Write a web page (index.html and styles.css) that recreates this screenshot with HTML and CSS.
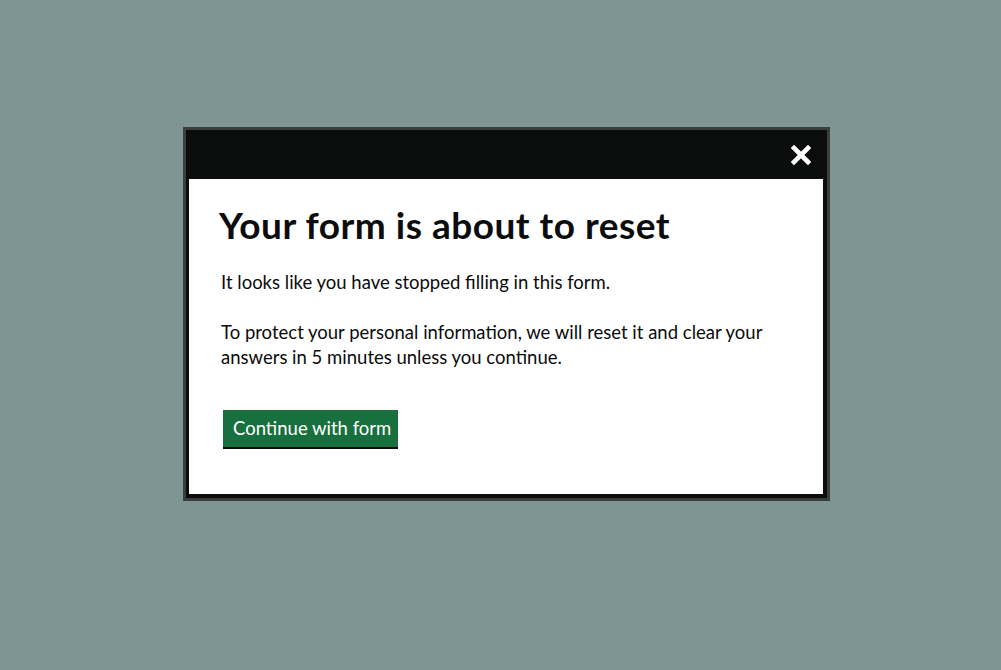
FILE: index.html
```html
<!DOCTYPE html>
<html lang="en">
<head>
<meta charset="utf-8">
<title>Your form is about to reset</title>
<link rel="stylesheet" href="styles.css">
</head>
<body>
<div class="overlay">
  <div class="dialog" role="dialog" aria-labelledby="dialog-title">
    <div class="dialog-bar">
      <button class="close" aria-label="Close">
        <svg width="20" height="20" viewBox="0 0 20 20" aria-hidden="true">
          <path d="M3 3 L17 17 M17 3 L3 17" stroke="#ffffff" stroke-width="4.6" stroke-linecap="square" fill="none"/>
        </svg>
      </button>
    </div>
    <div class="dialog-body">
      <h1 id="dialog-title" class="title">Your form is about to reset</h1>
      <p class="text">It looks like you have stopped filling in this form.</p>
      <p class="text">To protect your personal information, we will reset it and clear your answers in 5 minutes unless you continue.</p>
      <button class="btn">Continue with form</button>
    </div>
  </div>
</div>
</body>
</html>
```

FILE: styles.css
```css
html, body {
  margin: 0;
  padding: 0;
}
body {
  background: #7f9593;
  font-family: "Lato", "Liberation Sans", Arial, sans-serif;
  color: #0b0c0c;
  min-height: 670px;
}
.overlay {
  padding: 127px 0 0 183px;
}
.dialog {
  border: 3px solid #3b3e3e;
  background: #0b0c0c;
  padding: 0 4px 4px 3px;
  box-sizing: content-box;
  display: flex;
  flex-direction: column;
  width: 634px;
}
.dialog-bar {
  height: 49px;
  display: flex;
  justify-content: flex-end;
  align-items: center;
  padding-right: 12px;
}
.close {
  background: none;
  border: 0;
  padding: 0;
  margin: 0;
  width: 20px;
  height: 20px;
  display: block;
  cursor: pointer;
}
.close svg {
  display: block;
}
.dialog-body {
  background: #ffffff;
  padding: 26px 30px 45px 30px;
}
.title {
  margin: 0 0 25px 0;
  font-size: 37px;
  line-height: 40px;
  font-weight: 700;
  letter-spacing: 0.5px;
}
.text {
  margin: 0 0 25px 2px;
  font-size: 18.5px;
  line-height: 25px;
  max-width: 560px;
}
.btn {
  margin: 15px 0 2px 4px;
  display: inline-block;
  background: #18703e;
  color: #ffffff;
  border: 0;
  box-shadow: 0 2px 0 #0b0c0c;
  font-family: inherit;
  font-size: 18.5px;
  line-height: 21px;
  padding: 8px 7px 8px 10px;
}
```
